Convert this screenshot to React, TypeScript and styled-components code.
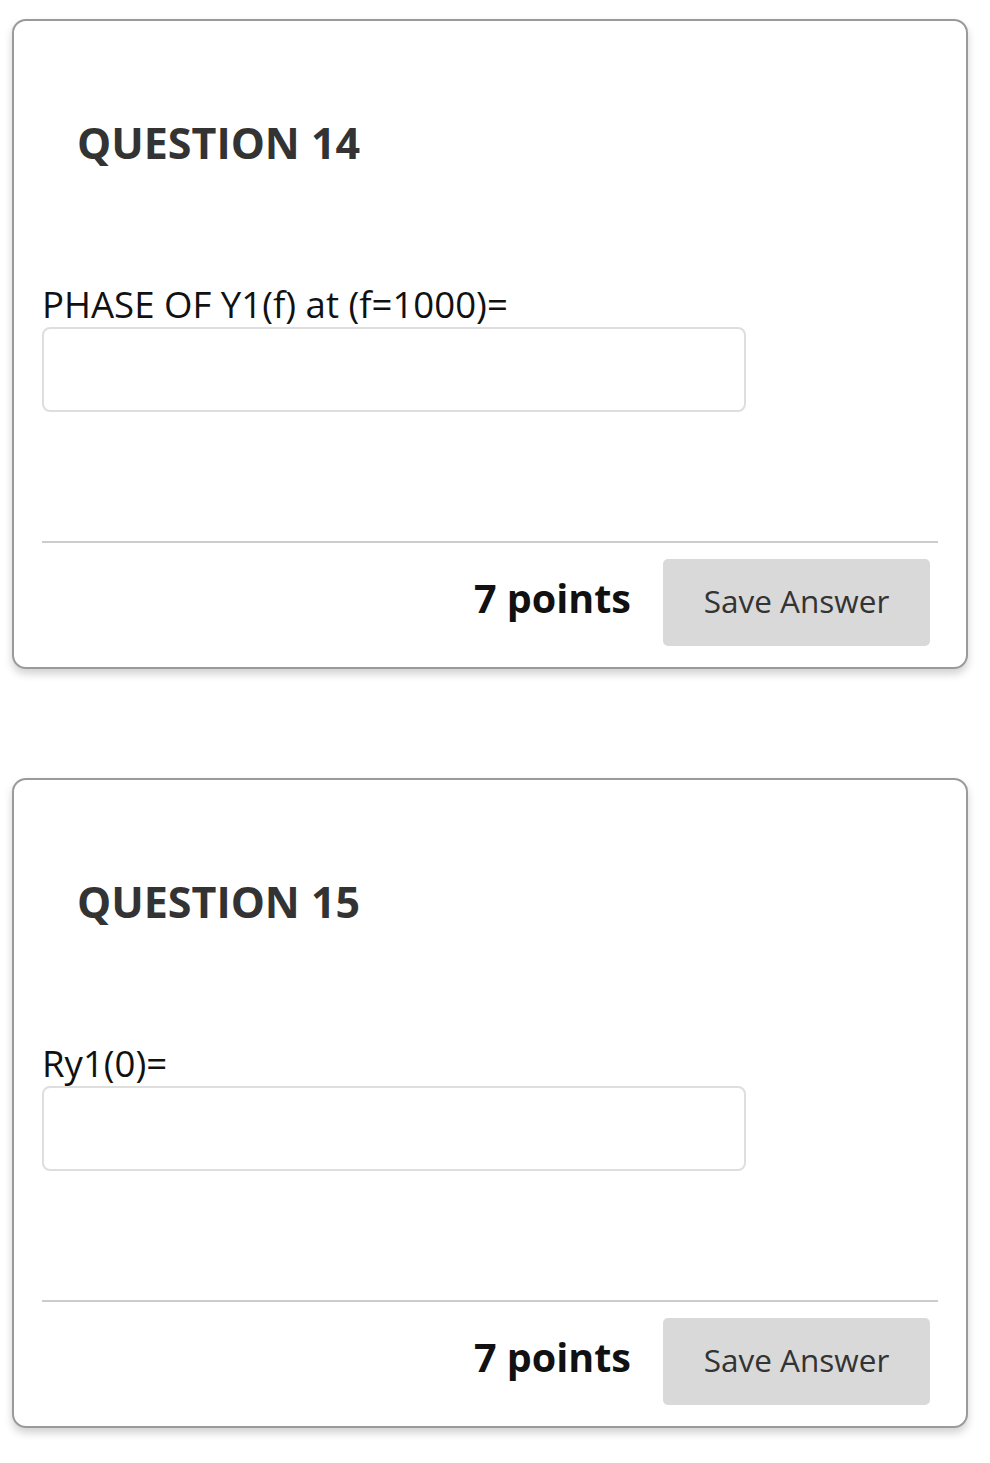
import React from 'react';
import styled, { createGlobalStyle } from 'styled-components';

const GlobalStyle = createGlobalStyle`
  body {
    margin: 0;
    background: #ffffff;
    font-family: 'Open Sans', 'Noto Sans', sans-serif;
  }
`;

type Question = {
  number: number;
  prompt: string;
  points: number;
};

const questions: Question[] = [
  { number: 14, prompt: 'PHASE OF Y1(f) at (f=1000)=', points: 7 },
  { number: 15, prompt: 'Ry1(0)=', points: 7 },
];

function QuestionCard({ question }: { question: Question }) {
  return (
    <StyledCard>
      <StyledTitle>QUESTION {question.number}</StyledTitle>
      <StyledPrompt>{question.prompt}</StyledPrompt>
      <StyledInput type="text" aria-label={question.prompt} />
      <StyledDivider />
      <StyledFooter>
        <StyledPoints>{question.points} points</StyledPoints>
        <StyledButton type="button">Save Answer</StyledButton>
      </StyledFooter>
    </StyledCard>
  );
}

function App() {
  return (
    <>
      <GlobalStyle />
      <StyledPage>
        {questions.map((q) => (
          <QuestionCard key={q.number} question={q} />
        ))}
      </StyledPage>
    </>
  );
}

const StyledPage = styled.div`
  display: flex;
  flex-direction: column;
  gap: 109px;
  padding: 19px 0 35px 12px;
`;

const StyledCard = styled.section`
  box-sizing: border-box;
  width: 956px;
  border: 2px solid #9a9a9a;
  border-radius: 14px;
  background: #ffffff;
  box-shadow: 0 5px 8px rgba(0, 0, 0, 0.18);
  display: flex;
  flex-direction: column;
  padding: 0 28px 21px 28px;
`;

const StyledTitle = styled.h2`
  margin: 92px 0 0 35px;
  font-size: 43px;
  line-height: 60px;
  font-weight: 700;
  color: #333333;
`;

const StyledPrompt = styled.div`
  margin-top: 107px;
  font-size: 36.6px;
  line-height: 48px;
  color: #111111;
`;

const StyledInput = styled.input`
  box-sizing: border-box;
  width: 704px;
  height: 85px;
  margin: -1px 0 0 0;
  border: 2px solid #dedede;
  border-radius: 8px;
  background: #ffffff;
  font-family: inherit;
  font-size: 30px;
  padding: 0 16px;

  &:focus {
    outline: none;
  }
`;

const StyledDivider = styled.hr`
  margin: 129px 0 0 0;
  border: none;
  height: 2px;
  background: #cccccc;
`;

const StyledFooter = styled.div`
  display: flex;
  justify-content: flex-end;
  align-items: center;
  gap: 32px;
  margin: 16px 8px 0 0;
`;

const StyledPoints = styled.div`
  font-size: 39.5px;
  line-height: 54px;
  font-weight: 700;
  color: #111111;
  margin-top: -9px;
`;

const StyledButton = styled.button`
  width: 267px;
  height: 87px;
  border: none;
  border-radius: 5px;
  background: #d9d9d9;
  color: #333333;
  font-family: inherit;
  font-size: 31.5px;
  padding: 0 0 4px 0;
  cursor: pointer;
`;

export default App;
